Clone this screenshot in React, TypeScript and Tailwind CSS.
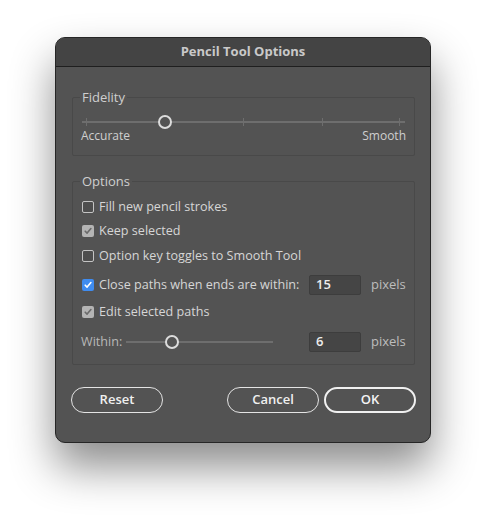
import React from "react";

const FONT = { fontFamily: '"Open Sans", "Noto Sans", sans-serif' };

function Checkbox({ state }: { state: "off" | "gray" | "blue" }) {
  if (state === "off") {
    return <div className="w-[12px] h-[12px] rounded-[2px] border border-[#c4c4c4] bg-[#4e4e4e] shrink-0" />;
  }
  const blue = state === "blue";
  return (
    <div
      className={
        "w-[12px] h-[12px] rounded-[2px] shrink-0 flex items-center justify-center " +
        (blue ? "bg-[#3f8cf0]" : "bg-[#b4b4b4]")
      }
    >
      <svg width="10" height="10" viewBox="0 0 10 10">
        <path
          d="M2.2 5.2 L4.1 7.1 L7.9 2.6"
          fill="none"
          stroke={blue ? "#ffffff" : "#6a6a6a"}
          strokeWidth="1.6"
          strokeLinecap="round"
          strokeLinejoin="round"
        />
      </svg>
    </div>
  );
}

function CheckRow({
  state,
  label,
  className,
  children,
}: {
  state: "off" | "gray" | "blue";
  label: string;
  className: string;
  children?: React.ReactNode;
}) {
  return (
    <div className={"flex items-center " + className}>
      <Checkbox state={state} />
      <span className="ml-[5px] text-[12.6px] text-[#d6d6d6]">{label}</span>
      {children}
    </div>
  );
}

function NumBox({ value }: { value: string }) {
  return (
    <div className="ml-auto flex items-center w-[52px] h-[20px] rounded-[2px] bg-[#454545] border border-[#3d3d3d] pl-[6px] text-[13px] text-[#ececec] font-semibold">
      {value}
    </div>
  );
}

function Pixels() {
  return <span className="ml-[10px] text-[13px] text-[#bdbdbd] w-[34px] text-right">pixels</span>;
}

export default function App() {
  return (
    <div className="w-[487px] h-[517px] bg-white pt-[37px] pl-[55px]" style={FONT}>
      <div className="w-[376px] h-[406px] rounded-[10px] border border-[#262626] bg-[#535353] overflow-hidden flex flex-col shadow-[0_24px_44px_rgba(0,0,0,0.45)]">
        <div className="h-[29px] shrink-0 bg-[#444444] border-b border-[#1f1f1f] flex items-center justify-center text-[13px] font-bold text-[#c9c9c9]">
          Pencil Tool Options
        </div>

        <fieldset className="ml-[16px] mr-[15px] mt-[22px] border border-[#494949] rounded-[2px] px-[9px] pb-[12px]">
          <legend className="ml-[-2px] px-[2px] h-[16px] leading-[16px] text-[13px] text-[#cfcfcf]">Fidelity</legend>
          <div className="relative mt-[10px] h-[14px]">
            <div className="absolute left-0 right-0 top-[6px] h-[2px] bg-[#6e6e6e]" />
            {[4, 161, 240, 317].map((x) => (
              <div key={x} className="absolute top-[3px] w-[1px] h-[8px] bg-[#6e6e6e]" style={{ left: x }} />
            ))}
            <div className="absolute left-[76px] top-0 w-[14px] h-[14px] rounded-full border-2 border-[#dcdcdc] bg-[#535353]" />
          </div>
          <div className="flex justify-between h-[14px] items-center text-[12px] text-[#cfcfcf] -mx-[1px]">
            <span>Accurate</span>
            <span>Smooth</span>
          </div>
        </fieldset>

        <fieldset className="ml-[16px] mr-[15px] mt-[17px] border border-[#494949] rounded-[2px] px-[9px] pb-[11px]">
          <legend className="ml-[-2px] px-[2px] h-[16px] leading-[16px] text-[13px] text-[#cfcfcf]">Options</legend>
          <div className="mt-[6px]" />
          <CheckRow state="off" label="Fill new pencil strokes" className="h-[24px]" />
          <CheckRow state="gray" label="Keep selected" className="h-[24px]" />
          <CheckRow state="off" label="Option key toggles to Smooth Tool" className="h-[26px]" />
          <CheckRow state="blue" label="Close paths when ends are within:" className="h-[32px]">
            <NumBox value="15" />
            <Pixels />
          </CheckRow>
          <CheckRow state="gray" label="Edit selected paths" className="h-[22px]" />
          <div className="mt-[8px] h-[22px] flex items-center">
            <span className="-ml-[1px] text-[12.6px] text-[#b8b8b8]">Within:</span>
            <div className="relative ml-[4px] w-[147px] h-[14px]">
              <div className="absolute left-0 right-0 top-[6px] h-[2px] bg-[#6e6e6e]" />
              <div className="absolute left-[39px] top-0 w-[14px] h-[14px] rounded-full border-2 border-[#dcdcdc] bg-[#535353]" />
            </div>
            <NumBox value="6" />
            <Pixels />
          </div>
        </fieldset>

        <div className="flex items-center ml-[15px] mr-[14px] mt-[22px]">
          <button className="w-[92px] h-[26px] rounded-full border border-[#e4e4e4] text-[13px] font-semibold text-[#f0f0f0]">
            Reset
          </button>
          <button className="ml-auto w-[92px] h-[26px] rounded-full border border-[#e4e4e4] text-[13px] font-semibold text-[#f0f0f0]">
            Cancel
          </button>
          <button className="ml-[5px] w-[92px] h-[26px] rounded-full border-2 border-[#f0f0f0] text-[13px] font-semibold text-[#f4f4f4]">
            OK
          </button>
        </div>
      </div>
    </div>
  );
}
